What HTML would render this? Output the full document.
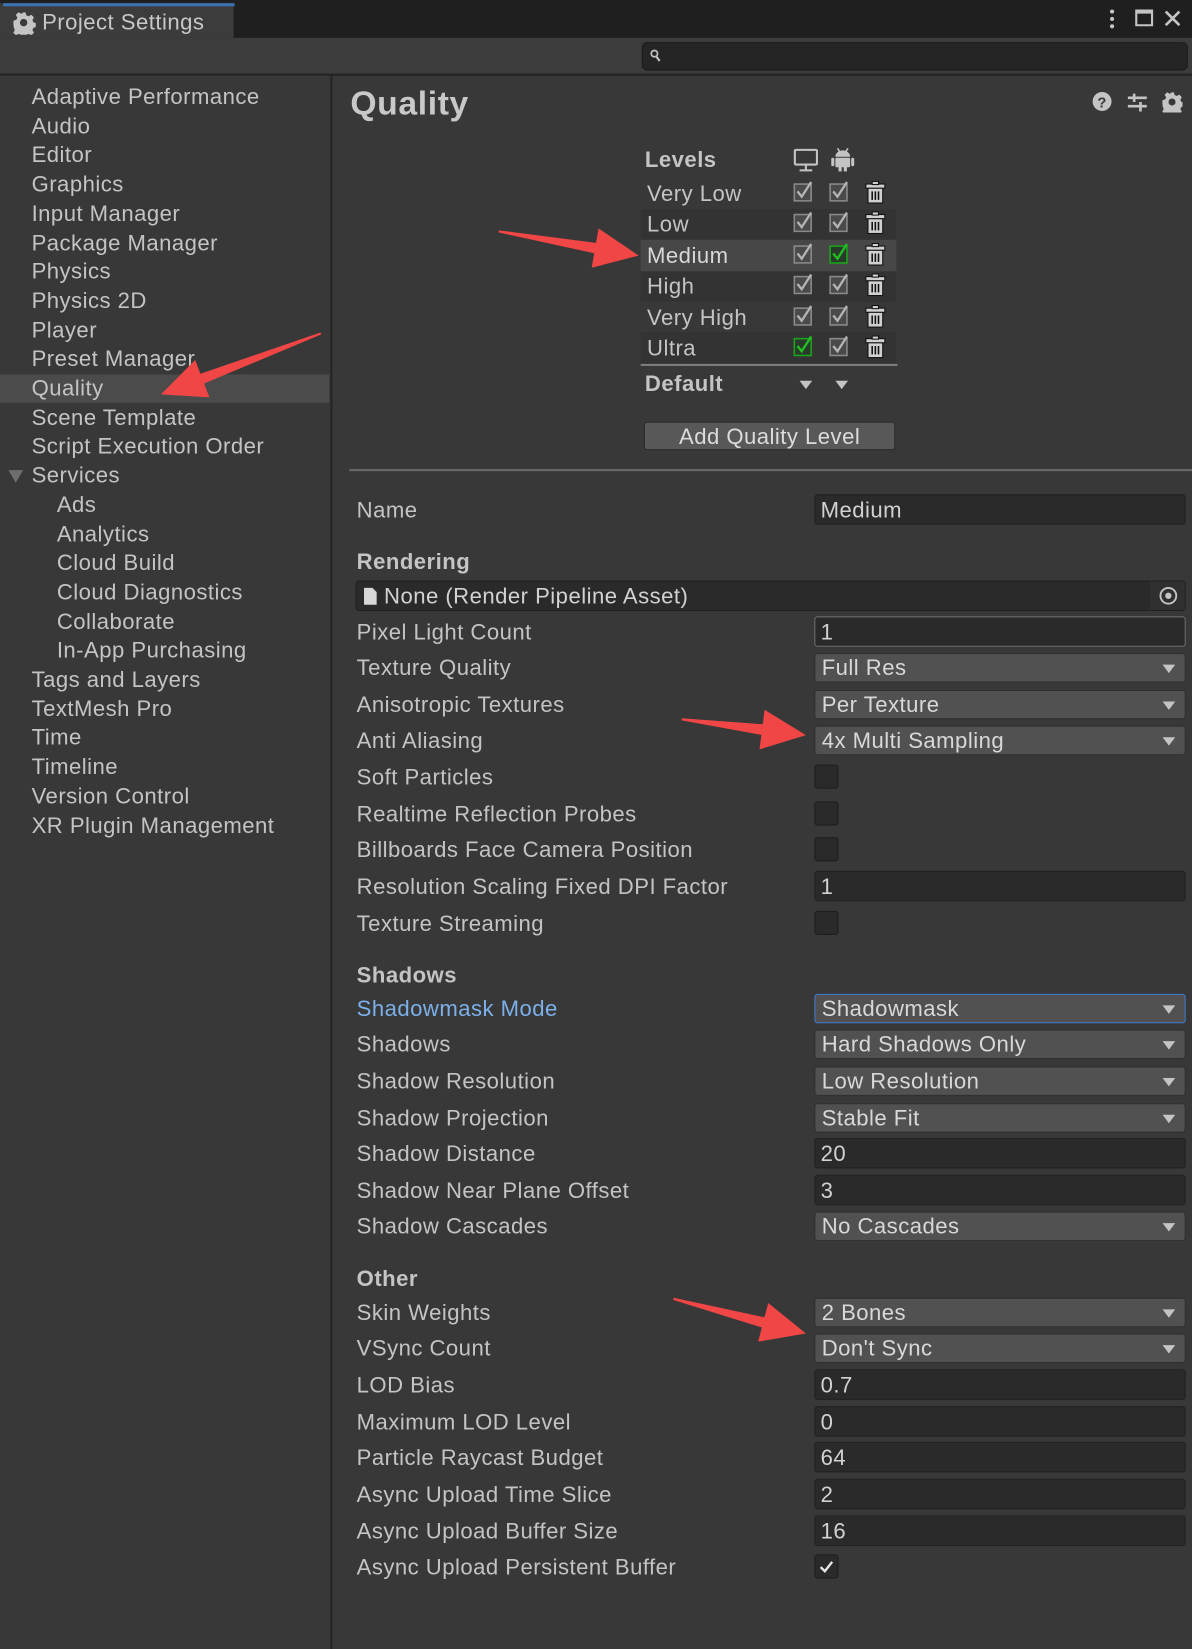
<!DOCTYPE html>
<html><head><meta charset="utf-8">
<style>
html,body{margin:0;padding:0;width:1192px;height:1649px;overflow:hidden;background:#383838;}
#root{position:absolute;left:0;top:0;width:1133px;height:1568px;transform:scale(1.0521,1.0517);transform-origin:0 0;background:#383838;font-family:"Liberation Sans",sans-serif;color:#c4c4c4;font-size:21px;letter-spacing:0.45px;}
.a{position:absolute;}
.t{position:absolute;height:28px;line-height:30px;white-space:nowrap;}
.b{font-weight:bold;}
.fld{position:absolute;left:774px;width:353px;height:28px;background:#2a2a2a;border:1px solid #212121;border-radius:3px;box-sizing:border-box;}
.fld span{position:absolute;left:5px;top:0;line-height:29px;color:#d2d2d2;}
.dd{position:absolute;left:774px;width:353px;height:28px;background:#515151;border:1px solid #303030;border-radius:3px;box-sizing:border-box;}
.dd span{position:absolute;left:6px;top:0;line-height:28px;color:#d8d8d8;}
.dd i{position:absolute;right:9px;top:10px;width:0;height:0;border-left:6px solid transparent;border-right:6px solid transparent;border-top:8px solid #c4c4c4;}
.cb{position:absolute;left:774px;width:23px;height:23px;background:#2a2a2a;border:1px solid #1e1e1e;border-radius:3px;box-sizing:border-box;}
</style></head><body>
<div id="root">
<div class="a" style="left:0;top:0;width:1133px;height:36px;background:#1f1f1f;"></div>
<div class="a" style="left:0;top:3px;width:222px;height:33px;background:#3c3c3c;"></div>
<div class="a" style="left:3px;top:3px;width:220px;height:3px;background:#3a72b0;"></div>
<svg class="a" style="left:11px;top:10px" width="23" height="23" viewBox="0 0 24 24"><path fill="#c4c4c4" d="M10 1h4l1 3.2 2.3 1 3-1.6 2.8 2.8-1.6 3 1 2.3 3.3 1v4l-3.3 1-1 2.3 1.6 3-2.8 2.8-3-1.6-2.3 1-1 3.3h-4l-1-3.3-2.3-1-3 1.6-2.8-2.8 1.6-3-1-2.3L1 14v-4l3.2-1 1-2.3-1.6-3 2.8-2.8 3 1.6 2.3-1z M12 8a4 4 0 1 0 0 8a4 4 0 1 0 0-8z" transform="scale(0.92) translate(1,1)"/></svg>
<div class="t" style="left:40px;top:7px;color:#c8c8c8;">Project Settings</div>
<div class="a" style="left:1055px;top:9px;width:4px;height:4px;border-radius:2px;background:#c4c4c4;box-shadow:0 7px 0 #c4c4c4,0 14px 0 #c4c4c4;"></div>
<div class="a" style="left:1079px;top:9px;width:17px;height:16px;border:2px solid #c4c4c4;border-top-width:4px;box-sizing:border-box;"></div>
<svg class="a" style="left:1106px;top:9px" width="17" height="17"><path d="M2 2L15 15M15 2L2 15" stroke="#c4c4c4" stroke-width="2.5"/></svg>
<div class="a" style="left:0;top:36px;width:1133px;height:36px;background:#3c3c3c;border-bottom:2px solid #232323;box-sizing:border-box;"></div>
<div class="a" style="left:610px;top:40px;width:519px;height:27px;background:#252525;border:1px solid #1a1a1a;border-radius:5px;box-sizing:border-box;"></div>
<svg class="a" style="left:617px;top:46px" width="12" height="14"><circle cx="5" cy="5" r="3" stroke="#c4c4c4" stroke-width="1.6" fill="none"/><path d="M7 8l3 4" stroke="#c4c4c4" stroke-width="2"/></svg>
<div class="a" style="left:0;top:72px;width:314px;height:1496px;background:#383838;"></div>
<div class="a" style="left:314px;top:72px;width:2px;height:1496px;background:#252525;"></div>
<div class="a" style="left:0;top:356px;width:313px;height:27px;background:#4b4b4b;"></div>
<div class="a" style="left:8px;top:447px;width:0;height:0;border-left:7px solid transparent;border-right:7px solid transparent;border-top:12px solid #6e6e6e;"></div>
<div id="left"></div>
<div class="t b" style="left:333px;top:80px;font-size:32px;height:34px;line-height:36px;color:#c8c8c8;letter-spacing:0.6px;">Quality</div>
<svg class="a" style="left:1038px;top:87px" width="19" height="19"><circle cx="9.5" cy="9.5" r="9" fill="#c4c4c4"/><text x="9.5" y="15" font-family="Liberation Sans" font-weight="bold" font-size="14" fill="#383838" text-anchor="middle">?</text></svg>
<svg class="a" style="left:1071px;top:86px" width="20" height="22"><path d="M1 7h18M1 15h18M7 3v8M13 11v9" stroke="#c4c4c4" stroke-width="2.5"/></svg>
<svg class="a" style="left:1104px;top:87px" width="20" height="20" viewBox="0 0 24 24"><path fill="#c4c4c4" d="M10 1h4l1 3.2 2.3 1 3-1.6 2.8 2.8-1.6 3 1 2.3 3.3 1v4l-3.3 1-1 2.3 1.6 3-2.8 2.8-3-1.6-2.3 1-1 3.3h-4l-1-3.3-2.3-1-3 1.6-2.8-2.8 1.6-3-1-2.3L1 14v-4l3.2-1 1-2.3-1.6-3 2.8-2.8 3 1.6 2.3-1z M12 8a4 4 0 1 0 0 8a4 4 0 1 0 0-8z"/></svg>
<div class="a" style="left:609px;top:199px;width:243px;height:29px;background:#333333;"></div>
<div class="a" style="left:609px;top:228px;width:243px;height:30px;background:#474747;"></div>
<div class="a" style="left:609px;top:258px;width:243px;height:29px;background:#333333;"></div>
<div class="a" style="left:609px;top:316px;width:243px;height:30px;background:#333333;"></div>
<div class="a" style="left:609px;top:346px;width:244px;height:2px;background:#7c7c7c;"></div>
<div class="t b" style="left:613px;top:138px;">Levels</div>
<svg class="a" style="left:754px;top:141px" width="25" height="23"><rect x="1.5" y="1.5" width="21" height="14" rx="1" fill="none" stroke="#c4c4c4" stroke-width="2"/><path d="M12 16v4M6 21h12" stroke="#c4c4c4" stroke-width="2"/></svg>
<svg class="a" style="left:790px;top:139px" width="22" height="25"><path d="M6 2l2 3M16 2l-2 3" stroke="#c4c4c4" stroke-width="1.5"/><path d="M4 10a7 6 0 0 1 14 0z" fill="#c4c4c4"/><rect x="4" y="11" width="14" height="9" rx="1" fill="#c4c4c4"/><rect x="0" y="11" width="3" height="8" rx="1.5" fill="#c4c4c4"/><rect x="19" y="11" width="3" height="8" rx="1.5" fill="#c4c4c4"/><rect x="7" y="19" width="3" height="5" fill="#c4c4c4"/><rect x="12" y="19" width="3" height="5" fill="#c4c4c4"/></svg>
<div id="levels"></div>
<div class="t b" style="left:613px;top:351px;">Default</div>
<div class="a" style="left:760px;top:362px;border-left:6px solid transparent;border-right:6px solid transparent;border-top:8px solid #c4c4c4;"></div>
<div class="a" style="left:794px;top:362px;border-left:6px solid transparent;border-right:6px solid transparent;border-top:8px solid #c4c4c4;"></div>
<div class="a" style="left:612px;top:401px;width:239px;height:27px;background:#585858;border:1px solid #2a2a2a;border-radius:3px;box-sizing:border-box;text-align:center;line-height:27px;color:#dcdcdc;">Add Quality Level</div>
<div class="a" style="left:332px;top:446px;width:801px;height:2px;background:#6a6a6a;"></div>
<div class="t" style="left:339px;top:471px;">Name</div>
<div class="fld" style="top:470px;height:29px;"><span>Medium</span></div>
<div class="t b" style="left:339px;top:520px;">Rendering</div>
<div class="a" style="left:338px;top:552px;width:789px;height:29px;background:#2a2a2a;border:1px solid #212121;border-radius:3px;box-sizing:border-box;"></div>
<div class="a" style="left:1093px;top:553px;width:33px;height:27px;background:#303030;"></div>
<svg class="a" style="left:345px;top:558px" width="14" height="18"><path d="M1 1h8l4 4v12H1z" fill="#d8d8d8"/></svg>
<div class="t" style="left:365px;top:553px;color:#d2d2d2;">None (Render Pipeline Asset)</div>
<svg class="a" style="left:1101px;top:557px" width="19" height="19"><circle cx="9.5" cy="9.5" r="7.5" fill="none" stroke="#c4c4c4" stroke-width="1.8"/><circle cx="9.5" cy="9.5" r="3" fill="#c4c4c4"/></svg>
<div id="props"></div>
<svg id="arrows" class="a" style="left:0;top:0" width="1133" height="1568"></svg>
</div>
<script>
var L=["Adaptive Performance","Audio","Editor","Graphics","Input Manager","Package Manager","Physics","Physics 2D","Player","Preset Manager","Quality","Scene Template","Script Execution Order","Services","Ads","Analytics","Cloud Build","Cloud Diagnostics","Collaborate","In-App Purchasing","Tags and Layers","TextMesh Pro","Time","Timeline","Version Control","XR Plugin Management"];
var sub={"Ads":1,"Analytics":1,"Cloud Build":1,"Cloud Diagnostics":1,"Collaborate":1,"In-App Purchasing":1};
var o="";L.forEach(function(n,i){var y=92+i*27.7-14;o+='<div class="t" style="left:'+(sub[n]?54:30)+'px;top:'+y.toFixed(1)+'px;">'+n+'</div>';});
document.getElementById("left").innerHTML=o;
function chk(x,y,g){var c=g?"#1aa51a":"#8a8a8a";return '<svg class="a" style="left:'+x+'px;top:'+y+'px" width="20" height="20"><rect x="1" y="3" width="16" height="16" fill="'+(g?"#2a3a2a":"#4a4a4a")+'" stroke="'+c+'" stroke-width="1.5"/><path d="M4 10l4 5L17 1" fill="none" stroke="'+(g?"#22c022":"#b4b4b4")+'" stroke-width="2.2"/></svg>';}
function trash(x,y){return '<svg class="a" style="left:'+x+'px;top:'+y+'px" width="20" height="22"><rect x="1" y="3" width="18" height="4" fill="#d0d0d0" stroke="#111" stroke-width="1"/><rect x="7" y="0.5" width="6" height="3" fill="#d0d0d0" stroke="#111" stroke-width="1"/><rect x="3" y="7" width="14" height="14" fill="#d0d0d0" stroke="#111" stroke-width="1"/><path d="M7 10v8M10 10v8M13 10v8" stroke="#111" stroke-width="1.5"/></svg>';}
var lv=["Very Low","Low","Medium","High","Very High","Ultra"];o="";
lv.forEach(function(n,i){var y=184+i*29.4;o+='<div class="t" style="left:615px;top:'+(y-14).toFixed(1)+'px;color:'+(i==2?"#d8d8d8":"#c4c4c4")+'">'+n+'</div>';
o+=chk(754,Math.round(y-12),i==5);o+=chk(788,Math.round(y-12),i==2);o+=trash(822,Math.round(y-12));});
document.getElementById("levels").innerHTML=o;
var P=[["Pixel Light Count","f","1",601],["Texture Quality","d","Full Res",635],["Anisotropic Textures","d","Per Texture",670],["Anti Aliasing","d","4x Multi Sampling",704],["Soft Particles","c","",739],["Realtime Reflection Probes","c","",774],["Billboards Face Camera Position","c","",808],["Resolution Scaling Fixed DPI Factor","f","1",843],["Texture Streaming","c","",878],
["Shadows","h","",927],["Shadowmask Mode","d","Shadowmask",959],["Shadows","d","Hard Shadows Only",993],["Shadow Resolution","d","Low Resolution",1028],["Shadow Projection","d","Stable Fit",1063],["Shadow Distance","f","20",1097],["Shadow Near Plane Offset","f","3",1132],["Shadow Cascades","d","No Cascades",1166],
["Other","h","",1216],["Skin Weights","d","2 Bones",1248],["VSync Count","d","Don't Sync",1282],["LOD Bias","f","0.7",1317],["Maximum LOD Level","f","0",1352],["Particle Raycast Budget","f","64",1386],["Async Upload Time Slice","f","2",1421],["Async Upload Buffer Size","f","16",1456],["Async Upload Persistent Buffer","k","",1490]];
o="";P.forEach(function(p,i){var y=p[3];
if(p[1]=="h"){o+='<div class="t b" style="left:339px;top:'+(y-14)+'px;">'+p[0]+'</div>';return;}
var blue=p[0]=="Shadowmask Mode";
o+='<div class="t" style="left:339px;top:'+(y-14)+'px;'+(blue?'color:#7cb0ea':'')+'">'+p[0]+'</div>';
if(p[1]=="f"){o+='<div class="fld" style="top:'+(y-15)+'px;height:29px;'+(i==0?'border-color:#6a6a6a;':'')+'"><span>'+p[2]+'</span></div>';}
if(p[1]=="d"){o+='<div class="dd" style="top:'+(y-14)+'px;'+(blue?'border-color:#3d7ad0;':'')+'"><span>'+p[2]+'</span><i></i></div>';}
if(p[1]=="c"){o+='<div class="cb" style="top:'+(y-12)+'px;"></div>';}
if(p[1]=="k"){o+='<div class="cb" style="top:'+(y-12)+'px;"><svg style="position:absolute;left:3px;top:4px" width="15" height="13"><path d="M2 7l4 4 7-9" fill="none" stroke="#e8e8e8" stroke-width="2.2"/></svg></div>';}
});
document.getElementById("props").innerHTML=o;
function arrow(tx,ty,px,py){var dx=px-tx,dy=py-ty,l=Math.hypot(dx,dy);dx/=l;dy/=l;var nx=-dy,ny=dx,L=42,W=19,w=5,bx=px-dx*L,by=py-dy*L;
var pts=[[tx+nx*1,ty+ny*1],[bx+nx*w,by+ny*w],[bx+nx*W,by+ny*W],[px,py],[bx-nx*W,by-ny*W],[bx-nx*w,by-ny*w],[tx-nx*1,ty-ny*1]];
return '<polygon fill="#f04646" points="'+pts.map(function(q){return q[0].toFixed(1)+","+q[1].toFixed(1)}).join(" ")+'"/>';}
document.getElementById("arrows").innerHTML=arrow(474,220,607,243)+arrow(305,317,153,375)+arrow(648,684,766,699)+arrow(640,1235,766,1268);
</script>
</body></html>
